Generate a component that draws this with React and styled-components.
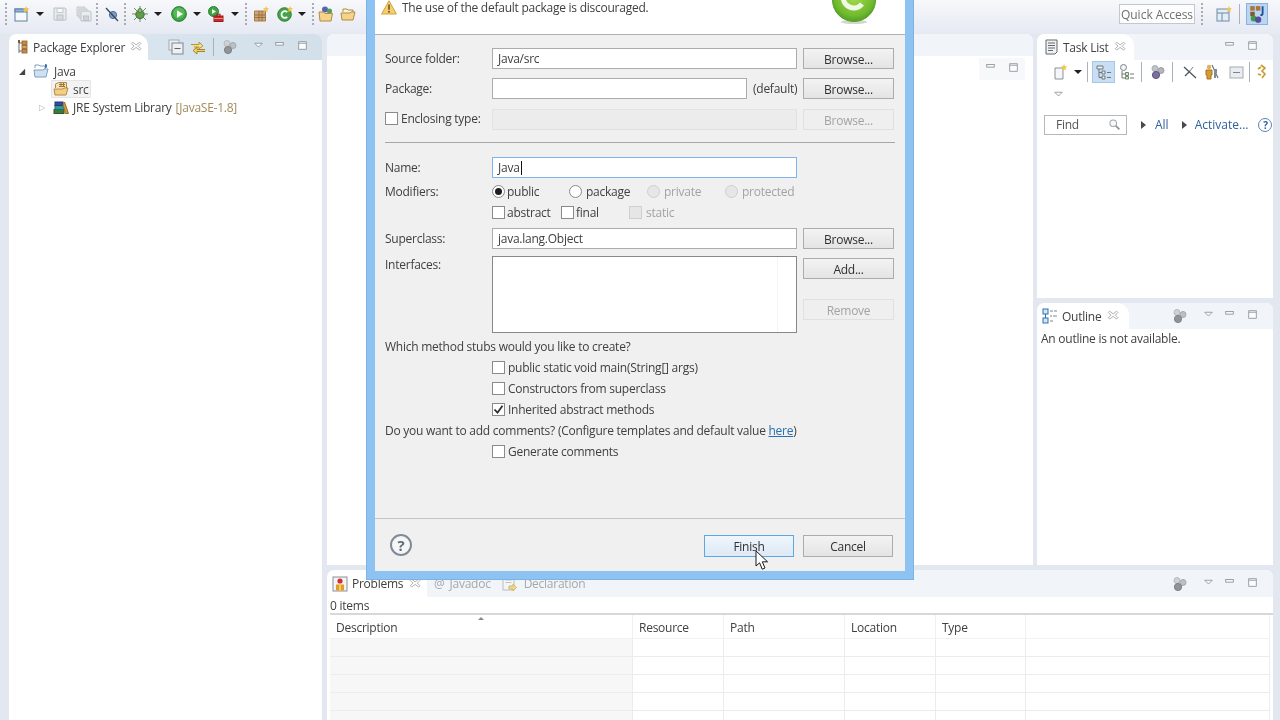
import styled, { createGlobalStyle } from "styled-components";

const GlobalStyle = createGlobalStyle`
  html, body {
    margin: 0;
    padding: 0;
    background: #eef1f6;
  }
  * {
    box-sizing: border-box;
  }
`;

function Svg({ size = 16, children }) {
  return (
    <svg width={size} height={size} viewBox="0 0 16 16" fill="none">
      {children}
    </svg>
  );
}

const NewFileIcon = () => (
  <Svg>
    <rect x="1" y="3" width="12" height="12" fill="#f7f9fc" stroke="#5f7f9f" />
    <rect x="1" y="3" width="12" height="3" fill="#8db4dc" stroke="#5f7f9f" />
    <path d="M12 0l1 2.2 2.4.3-1.8 1.6.5 2.4-2.1-1.2-2.1 1.2.5-2.4-1.8-1.6 2.4-.3z" fill="#f3c64f" />
  </Svg>
);
const SaveIcon = () => (
  <Svg>
    <path d="M2 2h11l1 1v11H2z" fill="#e9ecef" stroke="#bcc2c8" />
    <rect x="5" y="2.5" width="6" height="4" fill="#f7f8f9" stroke="#c5cad0" />
    <rect x="5" y="9" width="6" height="5" fill="#d5d9dd" stroke="#bcc2c8" />
  </Svg>
);
const SaveAllIcon = () => (
  <Svg>
    <path d="M1 1h8v9H1z" fill="#e2e5e8" stroke="#c4c8cd" />
    <path d="M3 3h8v9H3z" fill="#e2e5e8" stroke="#c4c8cd" />
    <path d="M5 5h9l1 1v9H5z" fill="#e9ecef" stroke="#bcc2c8" />
    <rect x="7.5" y="10" width="5" height="4.5" fill="#d0d4d8" stroke="#bcc2c8" />
  </Svg>
);
const SkipIcon = () => (
  <Svg>
    <circle cx="9" cy="9" r="3.6" fill="#7f9cc4" stroke="#4d6c99" />
    <path d="M2 2l12 13" stroke="#34495f" strokeWidth="1.3" />
  </Svg>
);
const BugIcon = () => (
  <Svg>
    <path d="M8 0v16M0 8h16M2 2l12 12M14 2L2 14" stroke="#6f8d63" strokeWidth="1" />
    <circle cx="8" cy="8.5" r="4.2" fill="#5f9a4d" stroke="#3c6f32" />
    <circle cx="8" cy="4.5" r="2" fill="#8fbf74" stroke="#4c7d3f" />
  </Svg>
);
const RunIcon = () => (
  <Svg>
    <circle cx="8" cy="8" r="7.4" fill="#3fa344" stroke="#2a8034" />
    <circle cx="8" cy="7" r="5.6" fill="#57b957" />
    <path d="M6 4.2l6 3.8-6 3.8z" fill="#f3fbf1" />
  </Svg>
);
const ExtToolIcon = () => (
  <Svg>
    <circle cx="5.5" cy="5.5" r="5" fill="#3fa344" stroke="#2a8034" />
    <path d="M4 3l4 2.5L4 8z" fill="#eefbe9" />
    <rect x="6" y="10" width="9" height="5.5" fill="#cc2b2b" stroke="#9b1c1c" />
    <rect x="9" y="8.2" width="3" height="2" stroke="#9b1c1c" />
    <path d="M6 12.5h9" stroke="#f08a8a" />
  </Svg>
);
const PackageIcon = () => (
  <Svg>
    <path d="M1.5 5h11v10h-11z" fill="#cfa878" stroke="#a57c4e" />
    <path d="M6 5v10M9 5v10M1.5 9h11M1.5 11.5h11" stroke="#9a6f42" />
    <path d="M13 0l.9 2 2.1.3-1.6 1.5.4 2.2-1.8-1-1.8 1 .4-2.2L10 2.3l2.1-.3z" fill="#f3c64f" />
  </Svg>
);
const ClassIcon = () => (
  <Svg>
    <circle cx="7.5" cy="8.5" r="6.8" fill="#46a24a" stroke="#2d7f36" />
    <path d="M10.2 6.2A3.3 3.3 0 1 0 10.2 10.8" stroke="#fff" strokeWidth="1.8" />
    <path d="M13 0l.9 2 2.1.3-1.6 1.5.4 2.2-1.8-1-1.8 1 .4-2.2L10 2.3l2.1-.3z" fill="#f3c64f" />
  </Svg>
);
const OpenTypeIcon = () => (
  <Svg>
    <circle cx="7" cy="3.5" r="3" fill="#5a62b8" />
    <circle cx="11.5" cy="5" r="2.6" fill="#4fa25a" />
    <path d="M1 6h5l1 1.5h7.5L13 15H2z" fill="#f4d48c" stroke="#b58a3f" />
  </Svg>
);
const FolderIcon = ({ tone = "#f4d48c", line = "#b58a3f" }) => (
  <Svg>
    <path d="M3 6V3h4l1 1h5v3" fill="#f8f2df" stroke={line} />
    <path d="M1 7h9l1-1h4l-2 8H2z" fill={tone} stroke={line} />
  </Svg>
);
const ProjectIcon = () => (
  <Svg>
    <path d="M2 5V2h4l1 1h5v3" fill="#fff" stroke="#7e9fc3" />
    <path d="M12 1l2 .5v3L12 5z" fill="#3e6fa8" />
    <path d="M1 7h9l1-1h4l-2 8H2z" fill="#cfe0f2" stroke="#7e9fc3" />
  </Svg>
);
const SourceIcon = () => (
  <Svg>
    <path d="M2.5 7V3l3-1.5h8V7" fill="#f1e1be" stroke="#b58a3f" />
    <path d="M6 3.5h6M6 5.5h6M8 2v4M10.5 2v4" stroke="#a4752f" />
    <path d="M1 8h9l1-1h4l-2 7H2z" fill="#f3cf85" stroke="#b58a3f" />
  </Svg>
);
const LibraryIcon = () => (
  <Svg>
    <rect x="1" y="10.5" width="10" height="4" fill="#3f7a3a" stroke="#2a5b2b" />
    <rect x="2" y="6.5" width="9" height="4" fill="#2e9a92" stroke="#1f6f6a" />
    <rect x="2" y="3" width="8" height="3.5" fill="#334d9e" stroke="#24367a" />
    <path d="M11.5 3l4 11.5h-3L10 6z" fill="#cf9a3e" stroke="#99702a" />
  </Svg>
);
const ExplorerIcon = () => (
  <Svg>
    <path d="M4 2v12M4 4h4M4 12h4" stroke="#6d6d6d" />
    <rect x="3" y="1" width="2" height="3" fill="#7d5a36" />
    <rect x="7" y="2" width="5" height="3.5" fill="#c88a44" stroke="#8f5f2a" strokeWidth="0.8" />
    <rect x="7" y="6.5" width="5" height="3" fill="#d8a35c" stroke="#8f5f2a" strokeWidth="0.8" />
    <rect x="7" y="10.5" width="5" height="3.5" fill="#c88a44" stroke="#8f5f2a" strokeWidth="0.8" />
  </Svg>
);
const CloseIcon = () => (
  <Svg size={14}>
    <path
      d="M3 2.5l4 3 4-3 1.5 1.5-3 3 3 3-1.5 1.5-4-3-4 3L1.5 10l3-3-3-3z"
      fill="#fdfdfd"
      stroke="#a2a8ae"
    />
  </Svg>
);
const CollapseIcon = () => (
  <Svg>
    <rect x="1" y="1" width="10" height="10" fill="#eef1f4" stroke="#a5abb2" />
    <rect x="4" y="4" width="11" height="11" fill="#eef1f4" stroke="#7e858d" />
    <path d="M6.5 9.5h6" stroke="#5d646c" strokeWidth="1.2" />
  </Svg>
);
const LinkIcon = () => (
  <Svg>
    <path d="M1 5.5h8V3l4 3.8-4 3V8H4" fill="#f7df8f" stroke="#b59334" />
    <path d="M15 10.5H7V8l-4 3.5 4 3.5v-2.5h8" fill="#f3cf6a" stroke="#a9852a" />
  </Svg>
);
const GroupIcon = () => (
  <Svg>
    <circle cx="5" cy="4.5" r="3" fill="#cfd2d5" stroke="#b6babd" />
    <circle cx="11" cy="6.5" r="3" fill="#bcc0c4" stroke="#a6aaae" />
    <circle cx="6" cy="11" r="3.6" fill="#909498" stroke="#7d8185" />
  </Svg>
);
const GroupColorIcon = () => (
  <Svg>
    <circle cx="5" cy="4.5" r="3" fill="#bfc4c8" stroke="#a8adb2" />
    <circle cx="11" cy="6.5" r="3" fill="#b3b6ba" stroke="#9a9fa4" />
    <circle cx="6" cy="11" r="3.6" fill="#7d6f9c" stroke="#5f5482" />
  </Svg>
);
const ViewMenuIcon = () => (
  <Svg size={12}>
    <path d="M1 3h10L6 8z" fill="#fbfcfd" stroke="#7e858d" />
  </Svg>
);
const MinimizeIcon = () => (
  <Svg size={12}>
    <rect x="1" y="2" width="10" height="3.5" fill="#f7f8fa" stroke="#80868d" />
  </Svg>
);
const MaximizeIcon = () => (
  <Svg size={12}>
    <rect x="1" y="1" width="10" height="10" fill="#fbfcfd" stroke="#80868d" />
    <path d="M1 3h10" stroke="#80868d" />
  </Svg>
);
const TaskListIcon = () => (
  <Svg>
    <path d="M2 1h11v12l-2 2H2z" fill="#f0f1f2" stroke="#62686e" />
    <path d="M4 4h7M4 6.5h7M4 9h7M4 11.5h5" stroke="#62686e" />
  </Svg>
);
const NewTaskIcon = () => (
  <Svg>
    <path d="M3 4h8v11H3z" fill="#f5f6f7" stroke="#8d9297" />
    <path d="M12 0l1 2.2 2.4.3-1.8 1.6.5 2.4-2.1-1.2-2.1 1.2.5-2.4-1.8-1.6 2.4-.3z" fill="#f3c64f" />
  </Svg>
);
const CategoryIcon = () => (
  <Svg>
    <path d="M1 2h6v3H1zM6 7h3v3H6zM6 12h3v3H6z" fill="#eef0f2" stroke="#6f767d" />
    <path d="M3 5v8.5h3M3 8.5h3M11 8.5h4M11 13.5h4" stroke="#6f767d" />
  </Svg>
);
const ScheduleIcon = () => (
  <Svg>
    <circle cx="4.5" cy="3.5" r="3" fill="#f3f4f5" stroke="#7a8188" />
    <path d="M3 7v7h3M3 10h3" stroke="#6f767d" />
    <path d="M6.5 8.5h3v3h-3zM6.5 12.5h3v2.5h-3z" fill="#dfe5d8" stroke="#6f8a66" />
    <path d="M11 10h4M11 14h4" stroke="#6f767d" />
  </Svg>
);
const CrossOutIcon = () => (
  <Svg>
    <path d="M2 3l12 11M3 12l5-5" stroke="#4c5661" strokeWidth="1.3" />
    <path d="M8 7l3-4" stroke="#7a8692" />
  </Svg>
);
const PeopleIcon = () => (
  <Svg>
    <circle cx="6" cy="3" r="2.2" fill="#e0b05a" />
    <path d="M3 6h6v5H8v4H4v-4H3z" fill="#d99a34" stroke="#a97320" />
    <path d="M9 1l6 13" stroke="#6b747c" strokeWidth="1.2" />
    <path d="M11 5h3v4h-1v5h-2z" fill="#7e8c96" />
  </Svg>
);
const TaskCollapseIcon = () => (
  <Svg>
    <rect x="2" y="3" width="13" height="11" fill="#e9edf1" stroke="#a5abb2" />
    <path d="M5 8.5h7" stroke="#7e858d" strokeWidth="1.2" />
  </Svg>
);
const FocusIcon = () => (
  <Svg>
    <path d="M6 1l4 3-3 3 3 3-3 4M3 5l3-2M3 10l3 1" stroke="#c79a2e" strokeWidth="1.6" />
  </Svg>
);
const SearchIcon = () => (
  <Svg size={14}>
    <circle cx="6" cy="6" r="3.8" fill="#f8fafb" stroke="#a2a8ae" strokeWidth="1.2" />
    <path d="M9 9l4 4" stroke="#8e949a" strokeWidth="2" />
  </Svg>
);
const OutlineIcon = () => (
  <Svg>
    <rect x="1" y="1" width="5" height="5" fill="#d5e6f6" stroke="#2f6fb5" />
    <rect x="1" y="10" width="5" height="5" fill="#d5e6f6" stroke="#2f6fb5" />
    <path d="M3.5 6v4" stroke="#2f6fb5" />
    <path d="M8 3h3M12 3h3M8 8h2M11 8h4M8 13h3" stroke="#7e858d" />
  </Svg>
);
const ProblemsIcon = () => (
  <Svg>
    <rect x="1" y="1" width="14" height="14" fill="#f2f4f6" stroke="#8a9097" />
    <circle cx="8" cy="5" r="2.6" fill="#d03030" />
    <path d="M4 8.5h8v6H4z" fill="#e59a2e" />
    <path d="M7 8.5h2v6H7z" fill="#f3d04e" />
  </Svg>
);
const DeclarationIcon = () => (
  <Svg>
    <rect x="2" y="1" width="11" height="13" fill="#f2f4f6" stroke="#b9bec4" />
    <path d="M4.5 4h6M4.5 6.5h6" stroke="#c0c5ca" />
    <path d="M8 10h4V8l3.5 3.5L12 15v-2H8z" fill="#f1d78f" stroke="#d8b75e" />
  </Svg>
);
const OpenPerspectiveIcon = () => (
  <Svg>
    <rect x="1" y="3" width="12" height="12" fill="#e3edf6" stroke="#6f8ba8" />
    <path d="M1 7h12M6 7v8" stroke="#6f8ba8" />
    <path d="M13 0l.9 2 2.1.3-1.6 1.5.4 2.2-1.8-1-1.8 1 .4-2.2L10 2.3l2.1-.3z" fill="#f3c64f" />
  </Svg>
);
const JavaPerspectiveIcon = () => (
  <Svg size={18}>
    <rect x="2" y="1" width="4" height="4" fill="#a8753a" />
    <rect x="7" y="1" width="4" height="4" fill="#a8753a" />
    <rect x="2" y="6" width="4" height="4" fill="#7d5a36" />
    <circle cx="5" cy="12" r="2.6" fill="#3f9a4a" />
    <circle cx="9" cy="13" r="2.8" fill="#5b4b9c" />
    <path d="M13 1v6.5q0 1.5-2 1.5" stroke="#1c4f96" strokeWidth="1.6" />
  </Svg>
);
const WarningIcon = () => (
  <svg width="16" height="15" viewBox="0 0 16 15">
    <path d="M8 .8L15.4 14H.6z" fill="#f5cf6a" stroke="#d49f3f" strokeLinejoin="round" />
    <path d="M8 4.5v5.2" stroke="#6d5427" strokeWidth="1.6" />
    <circle cx="8" cy="11.8" r="1" fill="#6d5427" />
  </svg>
);
const WizardLogo = () => (
  <svg width="46" height="46" viewBox="0 0 46 46">
    <defs>
      <radialGradient id="logoGreen" cx="0.5" cy="0.42" r="0.6">
        <stop offset="0" stopColor="#a9dc4f" />
        <stop offset="0.75" stopColor="#6fba2d" />
        <stop offset="1" stopColor="#4f9a20" />
      </radialGradient>
    </defs>
    <ellipse cx="23" cy="44" rx="13" ry="2" fill="#cfd8cc" />
    <circle cx="23" cy="22" r="21.5" fill="url(#logoGreen)" stroke="#5b9f2a" />
    <path d="M31 26A10.5 10.5 0 1 1 31 13" stroke="#f1f9e6" strokeWidth="5" fill="none" />
  </svg>
);
const TickIcon = () => (
  <svg width="11" height="11" viewBox="0 0 11 11">
    <path d="M1.5 5.5l3 3.2 5-7" stroke="#2c2c2c" strokeWidth="1.8" fill="none" />
  </svg>
);
const MouseCursor = () => (
  <svg width="14" height="21" viewBox="0 0 14 21">
    <path
      d="M1 1v15l3.6-3.2 2.6 6.4 2.8-1.2-2.7-6.2H12.6z"
      fill="#fff"
      stroke="#1c1c1c"
      strokeLinejoin="round"
    />
  </svg>
);

const Page = styled.div`
  position: relative;
  width: 1280px;
  height: 720px;
  overflow: hidden;
  background: #e2e7f0;
  font-family: "Open Sans", "Liberation Sans", sans-serif;
  font-size: 12px;
  letter-spacing: -0.25px;
  color: #404040;
  filter: blur(0.35px);
`;

const MainToolbar = styled.header`
  display: flex;
  align-items: center;
  height: 34px;
  padding-bottom: 6px;
  background: linear-gradient(#f7f8fb, #e5e9f2);
`;

const ToolSlot = styled.span`
  display: inline-flex;
  align-items: center;
  justify-content: center;
  flex: none;
  margin-left: ${(p) => p.$ml || 0}px;
`;

const Grip = styled.span`
  flex: none;
  width: 2px;
  height: 22px;
  margin-left: ${(p) => p.$ml || 0}px;
  border-left: 2px dotted #a9adb3;
`;

const Caret = styled.span`
  flex: none;
  width: 0;
  height: 0;
  margin-left: ${(p) => p.$ml || 0}px;
  border-left: 4px solid transparent;
  border-right: 4px solid transparent;
  border-top: 4px solid #1f1f1f;
`;

const Divider = styled.span`
  flex: none;
  width: 1px;
  height: ${(p) => p.$h || 20}px;
  margin-left: ${(p) => p.$ml || 0}px;
  background: #a9b2bb;
`;

const QuickAccess = styled.div`
  display: flex;
  align-items: center;
  justify-content: center;
  width: 76px;
  height: 20px;
  margin-left: auto;
  background: #fdfdfe;
  border: 1px solid #c4c8cc;
  color: #6f6f6f;
  letter-spacing: 0;
`;

const ActivePerspective = styled.span`
  display: inline-flex;
  align-items: center;
  justify-content: center;
  width: 22px;
  height: 22px;
  margin: 0 12px 0 6px;
  background: #bcd6f1;
  border: 1px solid #86b3df;
`;

const Workbench = styled.main`
  display: flex;
  gap: 5px;
  height: 686px;
  padding-left: 9px;
  padding-right: 7px;
`;

const RightArea = styled.div`
  display: flex;
  flex-direction: column;
  gap: 5px;
  width: 946px;
`;

const TopRow = styled.div`
  display: flex;
  gap: 4px;
  height: 531px;
`;

const SideColumn = styled.div`
  display: flex;
  flex-direction: column;
  gap: 5px;
  width: 236px;
`;

const Panel = styled.section`
  display: flex;
  flex-direction: column;
  flex: ${(p) => (p.$h ? `0 0 ${p.$h}px` : "1")};
  width: ${(p) => (p.$w ? `${p.$w}px` : "auto")};
  min-height: 0;
  overflow: hidden;
  background: #fff;
  border-radius: 7px 7px 0 0;
`;

const TabBar = styled.div`
  display: flex;
  align-items: center;
  flex: none;
  height: ${(p) => p.$h || 26}px;
  background: ${(p) => p.$bg || "#f1f4f9"};
`;

const Tab = styled.div`
  display: flex;
  align-items: center;
  align-self: stretch;
  flex: none;
  width: ${(p) => p.$w}px;
  padding-left: ${(p) => p.$pl || 6}px;
  background: #fff;
  border-radius: 7px 12px 0 0;
`;

const TabName = styled.span`
  margin-left: ${(p) => p.$ml || 6}px;
  white-space: nowrap;
  color: ${(p) => (p.$dim ? "#a8a8a8" : "#404040")};
`;

const Tree = styled.ul`
  list-style: none;
  margin: 2px 0 0;
  padding: 0;
`;

const TreeRow = styled.li`
  display: flex;
  align-items: center;
  height: 18px;
  padding-left: ${(p) => p.$indent}px;
`;

const Twist = styled.span`
  flex: none;
  width: 10px;
  color: ${(p) => (p.$open ? "#444" : "#b3b3b3")};
  font-size: 8px;
  line-height: 10px;
`;

const Highlight = styled.span`
  display: flex;
  align-items: center;
  gap: 4px;
  height: 18px;
  padding: 0 1px;
  background: #f3f3f3;
  border: 1px solid #e4e4e4;
  border-radius: 1px;
`;

const Muted = styled.span`
  margin-left: 4px;
  color: #a18a5e;
`;

const ViewButtons = styled.div`
  display: flex;
  justify-content: flex-end;
  gap: 11px;
  width: 46px;
  height: 22px;
  align-items: center;
  align-self: flex-end;
  margin: 2px 8px 0 0;
  background: #f6f8fa;
  padding-right: 4px;
`;

const TaskTools = styled.div`
  display: flex;
  align-items: center;
  height: ${(p) => p.$h}px;
  padding-left: ${(p) => p.$pl || 0}px;
`;

const ToggleOn = styled.span`
  display: inline-flex;
  align-items: center;
  justify-content: center;
  width: 23px;
  height: 22px;
  margin-left: ${(p) => p.$ml}px;
  background: #c9def3;
  border: 1px solid #a5c8ea;
`;

const FindBox = styled.div`
  display: flex;
  align-items: center;
  justify-content: space-between;
  width: 83px;
  height: 20px;
  padding: 0 4px 0 11px;
  border: 1px solid #b5b9bd;
  color: #555;
`;

const Triangle = styled.span`
  flex: none;
  width: 0;
  height: 0;
  margin-left: ${(p) => p.$ml}px;
  border-top: 4px solid transparent;
  border-bottom: 4px solid transparent;
  border-left: 5px solid #4a4a4a;
`;

const BlueLink = styled.span`
  margin-left: ${(p) => p.$ml}px;
  white-space: nowrap;
  color: #2f5f9e;
  letter-spacing: 0;
`;

const HelpDot = styled.span`
  display: inline-flex;
  align-items: center;
  justify-content: center;
  flex: none;
  width: 14px;
  height: 14px;
  margin-left: ${(p) => p.$ml || 0}px;
  border: 1px solid #5b86b5;
  border-radius: 50%;
  color: #2f5f9e;
  font-size: 10px;
  font-weight: 700;
`;

const OutlineNote = styled.p`
  margin: 1px 0 0 4px;
`;

const ItemCount = styled.div`
  height: 18px;
  margin-left: 3px;
  flex: none;
  border-bottom: 2px solid #d8d8d8;
`;

const Table = styled.div`
  margin-left: 3px;
  margin-right: 3px;
`;

const TableRow = styled.div`
  display: grid;
  grid-template-columns: 303px 91px 121px 91px 90px 1fr;
  height: ${(p) => p.$h || 18}px;
  border-bottom: 1px solid ${(p) => (p.$head ? "#f2f2f2" : "#ececec")};
`;

const Cell = styled.div`
  position: relative;
  display: flex;
  align-items: center;
  padding-left: 6px;
  padding-top: ${(p) => (p.$head ? 1 : 0)}px;
  background: ${(p) => (p.$sorted ? "#f7f7f7" : "transparent")};
  border-right: 1px solid ${(p) => (p.$head ? "#f0f0f0" : "#ececec")};
`;

const SortMark = styled.span`
  position: absolute;
  top: 2px;
  left: 148px;
  width: 0;
  height: 0;
  border-left: 3px solid transparent;
  border-right: 3px solid transparent;
  border-bottom: 3px solid #8a8a8a;
`;

const Dialog = styled.div`
  position: absolute;
  top: -2px;
  left: 367px;
  display: flex;
  flex-direction: column;
  width: 546px;
  height: 581px;
  background: #f0f0f0;
  border: 8px solid #8cc3f2;
  border-top: 0;
  box-shadow: 0 0 0 1px #7fb2e0;
`;

const DialogHeader = styled.div`
  display: flex;
  align-items: flex-start;
  justify-content: space-between;
  flex: none;
  height: 37px;
  overflow: hidden;
  padding-top: 1px;
  padding-left: 6px;
  padding-right: 28px;
  background: #fff;
  border-bottom: 1px solid #a9b0b6;
`;

const HeaderMessage = styled.div`
  display: flex;
  align-items: center;
  gap: 5px;
  height: 16px;
`;

const LogoSlot = styled.div`
  flex: none;
  margin-top: -21px;
`;

const DialogBody = styled.div`
  display: flex;
  flex-direction: column;
  flex: 1;
  padding: 13px 11px 0 10px;
`;

const FormRow = styled.div`
  display: grid;
  grid-template-columns: 107px 305px 97px;
  align-items: ${(p) => (p.$top ? "start" : "center")};
  flex: none;
  height: ${(p) => p.$h || 21}px;
  margin-top: ${(p) => p.$mt || 0}px;
`;

const FieldGroup = styled.div`
  display: flex;
  align-items: center;
  gap: 6px;
  white-space: nowrap;
`;

const Field = styled.div`
  display: flex;
  align-items: center;
  flex: ${(p) => (p.$w ? `0 0 ${p.$w}px` : "1")};
  height: 21px;
  padding-left: 5px;
  background: ${(p) => (p.$off ? "#ececec" : "#fff")};
  border: 1px solid ${(p) => (p.$active ? "#7eb4ea" : p.$off ? "#e2e2e2" : "#acacac")};
`;

const TextCaret = styled.span`
  width: 1px;
  height: 14px;
  margin-left: 1px;
  background: #111;
`;

const Button = styled.div`
  display: flex;
  align-items: center;
  justify-content: center;
  justify-self: end;
  width: ${(p) => p.$w || 91}px;
  height: ${(p) => p.$h || 21}px;
  padding-top: 1px;
  background: ${(p) =>
    p.$off
      ? "#efefef"
      : p.$hot
      ? "linear-gradient(#eff6fc, #dde9f5)"
      : "linear-gradient(#f3f3f3, #e4e4e4)"};
  border: 1px solid ${(p) => (p.$off ? "#e0e0e0" : p.$hot ? "#5ea7e2" : "#acacac")};
  color: ${(p) => (p.$off ? "#a3a3a3" : "#303030")};
`;

const Separator = styled.div`
  flex: none;
  height: 1px;
  margin-top: ${(p) => p.$mt}px;
  margin-right: -1px;
  background: #a8a8a8;
`;

const Choices = styled.div`
  display: flex;
  align-items: center;
  grid-column: ${(p) => (p.$wide ? "1 / -1" : "auto")};
  white-space: nowrap;
`;

const Choice = styled.label`
  display: flex;
  align-items: center;
  flex: none;
  gap: ${(p) => p.$gap || 2}px;
  width: ${(p) => (p.$w ? `${p.$w}px` : "auto")};
  margin-top: ${(p) => p.$up || 0}px;
  color: ${(p) => (p.$off ? "#a3a3a3" : "inherit")};
`;

const CheckBox = styled.span`
  display: inline-flex;
  align-items: center;
  justify-content: center;
  flex: none;
  width: 13px;
  height: 13px;
  background: ${(p) => (p.$off ? "#e6e6e6" : "#fff")};
  border: 1px solid ${(p) => (p.$off ? "#cfcfcf" : "#8a8a8a")};
`;

const Radio = styled(CheckBox)`
  border-radius: 50%;
`;

const RadioDot = styled.span`
  width: 7px;
  height: 7px;
  border-radius: 50%;
  background: #1f1f1f;
`;

const ListBox = styled.div`
  display: flex;
  justify-content: flex-end;
  height: 77px;
  background: #fff;
  border: 1px solid #85898e;
`;

const ListGutter = styled.div`
  width: 19px;
  border-left: 1px solid #f4f4f4;
`;

const ButtonStack = styled.div`
  display: flex;
  flex-direction: column;
  gap: 20px;
  justify-self: end;
  margin-top: 2px;
`;

const Indented = styled.div`
  grid-column: 2 / -1;
`;

const Link = styled.span`
  color: #2a6fb0;
  text-decoration: underline;
`;

const DialogFooter = styled.div`
  display: flex;
  align-items: center;
  flex: none;
  height: 53px;
  margin-top: auto;
  padding: 2px 12px 0 15px;
  border-top: 1px solid #c4c4c4;
  gap: 9px;
`;

const HelpButton = styled.span`
  display: inline-flex;
  align-items: center;
  justify-content: center;
  width: 22px;
  height: 22px;
  margin-right: auto;
  margin-bottom: 2px;
  background: #f6f6f6;
  border: 2px solid #7f8c98;
  border-radius: 50%;
  color: #5f6d7a;
  font-size: 15px;
  font-weight: 700;
`;

const FinishWrap = styled.div`
  position: relative;
`;

const CursorMark = styled.span`
  position: absolute;
  top: 15px;
  left: 51px;
  line-height: 0;
`;

const PanelControls = ({ marginLeft }) => (
  <>
    <ToolSlot $ml={marginLeft}>
      <GroupIcon />
    </ToolSlot>
    <ToolSlot $ml={16}>
      <ViewMenuIcon />
    </ToolSlot>
    <ToolSlot $ml={9}>
      <MinimizeIcon />
    </ToolSlot>
    <ToolSlot $ml={11}>
      <MaximizeIcon />
    </ToolSlot>
  </>
);

const problemColumns = ["Description", "Resource", "Path", "Location", "Type", ""];

function ProblemsTable() {
  return (
    <Table>
      <TableRow $head $h={24}>
        {problemColumns.map((name, i) => (
          <Cell $head key={i}>
            {name}
            {i === 0 && <SortMark />}
          </Cell>
        ))}
      </TableRow>
      {[0, 1, 2, 3, 4].map((row) => (
        <TableRow key={row}>
          {problemColumns.map((name, i) => (
            <Cell $sorted={i === 0} key={i} />
          ))}
        </TableRow>
      ))}
    </Table>
  );
}

function NewClassDialog() {
  return (
    <Dialog>
      <DialogHeader>
        <HeaderMessage>
          <WarningIcon />
          <span>The use of the default package is discouraged.</span>
        </HeaderMessage>
        <LogoSlot>
          <WizardLogo />
        </LogoSlot>
      </DialogHeader>
      <DialogBody>
        <FormRow>
          <span>Source folder:</span>
          <Field>Java/src</Field>
          <Button>Browse...</Button>
        </FormRow>
        <FormRow $mt={9}>
          <span>Package:</span>
          <FieldGroup>
            <Field $w={255} />
            <span>(default)</span>
          </FieldGroup>
          <Button>Browse...</Button>
        </FormRow>
        <FormRow $mt={10}>
          <Choice $gap={3} $up={-2}>
            <CheckBox />
            Enclosing type:
          </Choice>
          <Field $off />
          <Button $off>Browse...</Button>
        </FormRow>
        <Separator $mt={12} />
        <FormRow $mt={14}>
          <span>Name:</span>
          <Field $active>
            Java
            <TextCaret />
          </Field>
        </FormRow>
        <FormRow $mt={3} $h={20}>
          <span>Modifiers:</span>
          <Choices>
            <Choice $w={77}>
              <Radio>
                <RadioDot />
              </Radio>
              public
            </Choice>
            <Choice $w={78} $gap={4}>
              <Radio />
              package
            </Choice>
            <Choice $w={78} $off $gap={4}>
              <Radio $off />
              private
            </Choice>
            <Choice $off $gap={4}>
              <Radio $off />
              protected
            </Choice>
          </Choices>
        </FormRow>
        <FormRow $mt={1} $h={20}>
          <span />
          <Choices>
            <Choice $w={69}>
              <CheckBox />
              abstract
            </Choice>
            <Choice $w={68}>
              <CheckBox />
              final
            </Choice>
            <Choice $off $gap={4}>
              <CheckBox $off />
              static
            </Choice>
          </Choices>
        </FormRow>
        <FormRow $mt={6}>
          <span>Superclass:</span>
          <Field>java.lang.Object</Field>
          <Button>Browse...</Button>
        </FormRow>
        <FormRow $mt={7} $h={77} $top>
          <span>Interfaces:</span>
          <ListBox>
            <ListGutter />
          </ListBox>
          <ButtonStack>
            <Button>Add...</Button>
            <Button $off>Remove</Button>
          </ButtonStack>
        </FormRow>
        <FormRow $mt={3} $h={20}>
          <Choices $wide>Which method stubs would you like to create?</Choices>
        </FormRow>
        <FormRow $mt={1} $h={20}>
          <Indented>
            <Choice $gap={3}>
              <CheckBox />
              public static void main(String[] args)
            </Choice>
          </Indented>
        </FormRow>
        <FormRow $mt={1} $h={20}>
          <Indented>
            <Choice $gap={3}>
              <CheckBox />
              Constructors from superclass
            </Choice>
          </Indented>
        </FormRow>
        <FormRow $mt={1} $h={20}>
          <Indented>
            <Choice $gap={3}>
              <CheckBox>
                <TickIcon />
              </CheckBox>
              Inherited abstract methods
            </Choice>
          </Indented>
        </FormRow>
        <FormRow $mt={1} $h={20}>
          <Choices $wide>
            Do you want to add comments? (Configure templates and default value&nbsp;
            <Link>here</Link>)
          </Choices>
        </FormRow>
        <FormRow $mt={1} $h={20}>
          <Indented>
            <Choice $gap={3}>
              <CheckBox />
              Generate comments
            </Choice>
          </Indented>
        </FormRow>
      </DialogBody>
      <DialogFooter>
        <HelpButton>?</HelpButton>
        <FinishWrap>
          <Button $hot $w={90} $h={22}>
            Finish
          </Button>
          <CursorMark>
            <MouseCursor />
          </CursorMark>
        </FinishWrap>
        <Button $w={90} $h={22}>
          Cancel
        </Button>
      </DialogFooter>
    </Dialog>
  );
}

export default function App() {
  return (
    <Page>
      <GlobalStyle />
      <MainToolbar>
        <Grip $ml={5} />
        <ToolSlot $ml={7}><NewFileIcon /></ToolSlot>
        <Caret $ml={6} />
        <ToolSlot $ml={8}><SaveIcon /></ToolSlot>
        <ToolSlot $ml={8}><SaveAllIcon /></ToolSlot>
        <Grip $ml={4} />
        <ToolSlot $ml={6}><SkipIcon /></ToolSlot>
        <Grip $ml={4} />
        <ToolSlot $ml={6}><BugIcon /></ToolSlot>
        <Caret $ml={6} />
        <ToolSlot $ml={9}><RunIcon /></ToolSlot>
        <Caret $ml={6} />
        <ToolSlot $ml={7}><ExtToolIcon /></ToolSlot>
        <Caret $ml={7} />
        <Grip $ml={6} />
        <ToolSlot $ml={6}><PackageIcon /></ToolSlot>
        <ToolSlot $ml={8}><ClassIcon /></ToolSlot>
        <Caret $ml={5} />
        <Grip $ml={6} />
        <ToolSlot $ml={4}><OpenTypeIcon /></ToolSlot>
        <ToolSlot $ml={6}><FolderIcon /></ToolSlot>
        <QuickAccess>Quick Access</QuickAccess>
        <Grip $ml={6} />
        <ToolSlot $ml={13}><OpenPerspectiveIcon /></ToolSlot>
        <Divider $ml={7} />
        <ActivePerspective><JavaPerspectiveIcon /></ActivePerspective>
      </MainToolbar>

      <Workbench>
        <Panel $w={313}>
          <TabBar $bg="linear-gradient(90deg, #dce7f1, #d3e0ea)">
            <Tab $w={139} $pl={6}>
              <ExplorerIcon />
              <TabName $ml={2}>Package Explorer</TabName>
              <ToolSlot $ml={5}><CloseIcon /></ToolSlot>
            </Tab>
            <ToolSlot $ml={20}><CollapseIcon /></ToolSlot>
            <ToolSlot $ml={6}><LinkIcon /></ToolSlot>
            <Divider $ml={7} $h={18} />
            <PanelControls marginLeft={8} />
          </TabBar>
          <Tree>
            <TreeRow $indent={10}>
              <Twist $open>◢</Twist>
              <ToolSlot $ml={4}><ProjectIcon /></ToolSlot>
              <TabName $ml={5}>Java</TabName>
            </TreeRow>
            <TreeRow $indent={42}>
              <Highlight>
                <SourceIcon />
                src
              </Highlight>
            </TreeRow>
            <TreeRow $indent={30}>
              <Twist>▷</Twist>
              <ToolSlot $ml={4}><LibraryIcon /></ToolSlot>
              <TabName $ml={4}>JRE System Library</TabName>
              <Muted>[JavaSE-1.8]</Muted>
            </TreeRow>
          </Tree>
        </Panel>

        <RightArea>
          <TopRow>
            <Panel $w={706}>
              <TabBar $h={22} />
              <ViewButtons>
                <MinimizeIcon />
                <MaximizeIcon />
              </ViewButtons>
            </Panel>
            <SideColumn>
              <Panel $h={264}>
                <TabBar>
                  <Tab $w={97} $pl={7}>
                    <TaskListIcon />
                    <TabName $ml={3}>Task List</TabName>
                    <ToolSlot $ml={6}><CloseIcon /></ToolSlot>
                  </Tab>
                  <ToolSlot $ml={91}><MinimizeIcon /></ToolSlot>
                  <ToolSlot $ml={11}><MaximizeIcon /></ToolSlot>
                </TabBar>
                <TaskTools $h={24} $pl={15}>
                  <NewTaskIcon />
                  <Caret $ml={6} />
                  <Divider $ml={5} />
                  <ToggleOn $ml={4}><CategoryIcon /></ToggleOn>
                  <ToolSlot $ml={4}><ScheduleIcon /></ToolSlot>
                  <Divider $ml={6} />
                  <ToolSlot $ml={8}><GroupColorIcon /></ToolSlot>
                  <Divider $ml={6} />
                  <ToolSlot $ml={9}><CrossOutIcon /></ToolSlot>
                  <ToolSlot $ml={5}><PeopleIcon /></ToolSlot>
                  <ToolSlot $ml={9}><TaskCollapseIcon /></ToolSlot>
                  <Divider $ml={5} />
                  <ToolSlot $ml={5}><FocusIcon /></ToolSlot>
                </TaskTools>
                <TaskTools $h={24} $pl={17}>
                  <ViewMenuIcon />
                </TaskTools>
                <TaskTools $h={33} $pl={7}>
                  <FindBox>
                    Find
                    <SearchIcon />
                  </FindBox>
                  <Triangle $ml={14} />
                  <BlueLink $ml={9}>All</BlueLink>
                  <Triangle $ml={13} />
                  <BlueLink $ml={8}>Activate...</BlueLink>
                  <HelpDot $ml={10}>?</HelpDot>
                </TaskTools>
              </Panel>
              <Panel>
                <TabBar>
                  <Tab $w={92} $pl={5}>
                    <OutlineIcon />
                    <TabName $ml={4}>Outline</TabName>
                    <ToolSlot $ml={6}><CloseIcon /></ToolSlot>
                  </Tab>
                  <PanelControls marginLeft={43} />
                </TabBar>
                <OutlineNote>An outline is not available.</OutlineNote>
              </Panel>
            </SideColumn>
          </TopRow>
          <Panel>
            <TabBar $h={27}>
              <Tab $w={100} $pl={5}>
                <ProblemsIcon />
                <TabName $ml={4}>Problems</TabName>
                <ToolSlot $ml={6}><CloseIcon /></ToolSlot>
              </Tab>
              <TabName $ml={7} $dim>@</TabName>
              <TabName $ml={5} $dim>Javadoc</TabName>
              <ToolSlot $ml={10}><DeclarationIcon /></ToolSlot>
              <TabName $ml={7} $dim>Declaration</TabName>
              <PanelControls marginLeft={587} />
            </TabBar>
            <ItemCount>0 items</ItemCount>
            <ProblemsTable />
          </Panel>
        </RightArea>
      </Workbench>

      <NewClassDialog />
    </Page>
  );
}
